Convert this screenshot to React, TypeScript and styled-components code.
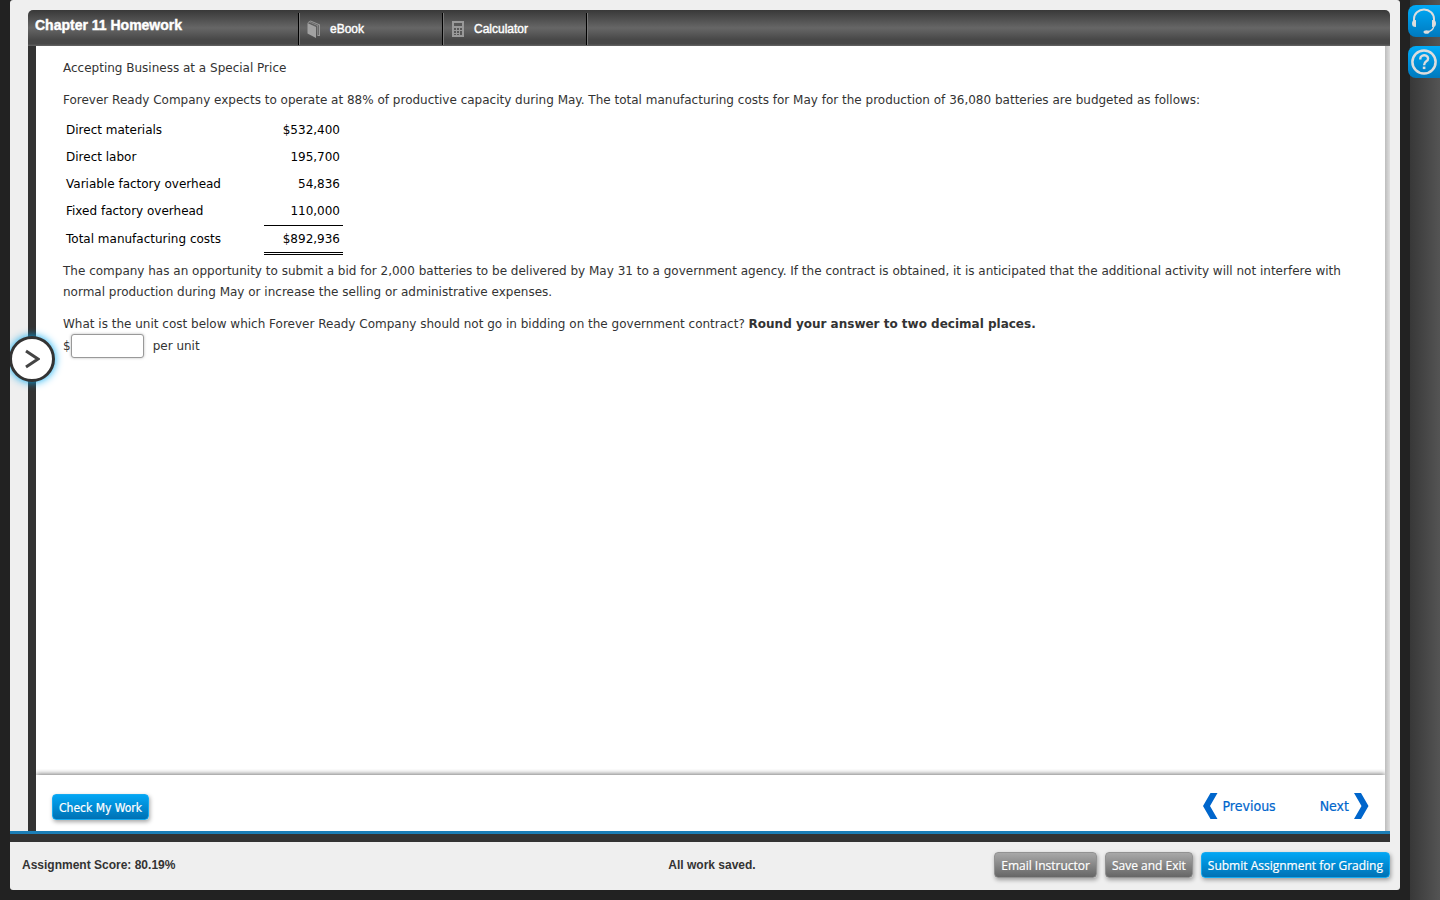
import React from "react";
import styled, { createGlobalStyle, css } from "styled-components";

const GlobalStyle = createGlobalStyle`
  * { box-sizing: border-box; }
  body { margin: 0; background: #222; }
`;

const arial = '"Liberation Sans", Arial, sans-serif';
const verdana = 'Verdana, "DejaVu Sans", sans-serif';
const tahoma = 'Tahoma, "DejaVu Sans Condensed", sans-serif';
const openSans = '"Open Sans", "Noto Sans", sans-serif';

const Page = styled.div`
  display: flex;
  min-height: 100vh;
  padding-left: 10px;
  background: #222;
`;

const Shell = styled.main`
  position: relative;
  flex: 1;
  min-width: 0;
  display: flex;
  flex-direction: column;
  margin-bottom: 10px;
  padding-top: 10px;
  background: #efefef;
  border-radius: 3px;
`;

const Header = styled.header`
  display: flex;
  height: 36px;
  margin: 0 10px 0 18px;
  padding-top: 3px;
  border-radius: 5px 5px 0 0;
  background: linear-gradient(#383838 0%, #666 50%, #484848 82%, #484848 94%, #666 100%);
`;

const Title = styled.h1`
  width: 270px;
  margin: 0;
  padding: 3px 7px 0;
  font: bold 14px/18px ${arial};
  color: #fff;
  -webkit-text-stroke: 0.4px #fff;
`;

const Tools = styled.nav`
  display: flex;
  height: 32px;
  border-right: 1px solid #000;
  box-shadow: 1px 0 #777;
`;

const ToolButton = styled.button`
  display: flex;
  align-items: center;
  gap: 7px;
  width: 144px;
  padding: 0 0 0 8px;
  border: 0;
  border-left: 1px solid #000;
  box-shadow: inset 1px 0 #777;
  background: none;
  color: #fff;
  font: 12px/16px ${arial};
  -webkit-text-stroke: 0.4px #fff;
`;

const Frame = styled.div`
  flex: 1;
  display: flex;
  flex-direction: column;
  margin: 0 10px 0 18px;
  padding-right: 5px;
  border-left: 8px solid #333;
  background: linear-gradient(to left, #dedede 0, #bdbdbd 5px);
`;

const Question = styled.article`
  flex: 1;
  padding: 12px 27px;
  background: #fff;
  color: #333;
  font: 12px/21px ${verdana};
`;

const Paragraph = styled.p`
  margin: 0 0 11px;
`;

const CostTable = styled.table`
  margin: -5px 0 6px;
  border-collapse: collapse;
  color: #000;
  line-height: 21px;
  th {
    width: 201px;
    padding: 3px;
    font-weight: normal;
    text-align: left;
  }
  td {
    width: 79px;
    padding: 3px;
    text-align: right;
  }
`;

const TotalRow = styled.tr`
  td {
    padding: 3px 3px 2px;
    border-top: 1px solid #000;
    border-bottom: 3px double #000;
  }
`;

const AnswerLine = styled.div`
  display: flex;
  align-items: center;
  height: 24px;
  margin-top: -12px;
`;

const AnswerInput = styled.input`
  width: 73px;
  height: 24px;
  margin-right: 9px;
  padding: 0 4px;
  border: 1px solid #999;
  border-radius: 3px;
  box-shadow: 0 0 3px #bbb;
  font: 12px ${verdana};
`;

const ActionBar = styled.div`
  position: relative;
  display: flex;
  align-items: center;
  justify-content: space-between;
  height: 56px;
  padding: 7px 16px 0;
  background: #fff;
  box-shadow: 0 -1px 5px #777;
  clip-path: inset(-6px 0 0 0);
`;

const Pager = styled.div`
  display: flex;
  gap: 44px;
  margin-top: -2px;
`;

const PagerLink = styled.a`
  display: flex;
  align-items: center;
  gap: 5px;
  color: #06c;
  font: 14px/26px ${tahoma};
  -webkit-text-stroke: 0.2px #06c;
  text-decoration: none;
`;

const Button = styled.button<{ $tone: "blue" | "grey"; $face?: string }>`
  height: 26px;
  padding: 2px 6px 0;
  border: 1px solid;
  border-radius: 4px;
  box-shadow: 1px 2px 4px rgba(0, 0, 0, 0.35);
  color: #fff;
  font: 12px/22px ${({ $face }) => $face ?? openSans};
  -webkit-text-stroke: 0.2px #fff;
  white-space: nowrap;
  ${({ $tone }) =>
    $tone === "blue"
      ? css`
          border-color: #16aaf0;
          background: linear-gradient(#02a6f4, #0071b4);
        `
      : css`
          border-color: #929292;
          background: linear-gradient(#a8a8a8, #666);
        `}
`;

const Divider = styled.div`
  height: 11px;
  margin-right: 10px;
  border-top: 3px solid #1c7eb6;
  background: #333;
`;

const Footer = styled.footer`
  display: grid;
  grid-template-columns: 1fr auto 1fr;
  align-items: center;
  height: 48px;
  padding: 0 10px 2px 12px;
  color: #333;
  font: bold 12px/16px ${arial};
`;

const SaveStatus = styled.span`
  padding-left: 12px;
`;

const FooterActions = styled.div`
  display: flex;
  justify-content: flex-end;
  gap: 8px;
`;

const DrawerToggle = styled.button`
  position: absolute;
  left: 0;
  top: 336px;
  display: grid;
  place-items: center;
  width: 46px;
  height: 46px;
  margin-left: -1px;
  padding: 0;
  border: 3px solid #333;
  border-radius: 50%;
  background: #fff;
  box-shadow: 0 0 9px #00a8f0;
  clip-path: inset(-12px -12px -12px 1px);
`;

const Rail = styled.aside`
  display: flex;
  flex-direction: column;
  gap: 9px;
  width: 30px;
  margin-left: 10px;
  padding-top: 5px;
  background: linear-gradient(to right, #383838, #545454);
`;

const RailButton = styled.button`
  display: grid;
  place-items: center;
  width: 32px;
  height: 32px;
  margin-left: -2px;
  padding: 0;
  border: 0;
  border-radius: 8px 0 0 8px;
  background: linear-gradient(#00abf8, #0079be);
`;

const BookIcon = () => (
  <svg width="16" height="18" viewBox="0 0 16 18" aria-hidden="true">
    <path d="M.5 3 9 7V18L.5 13.500Z" fill="#a2a2a2" />
    <path d="M.5 2.500 3.500.5 13 4.500V16H10V6.200L3 3Z" fill="#999" />
    <path d="M2 2.600 10 6.200V16.500M3 1.700 11.500 5.300V15" fill="none" stroke="#555" strokeWidth=".7" />
  </svg>
);

const CalculatorIcon = () => (
  <svg width="16" height="16" viewBox="0 0 16 16" aria-hidden="true">
    <path d="M1 0H13V16H1Z" fill="#999" />
    <path
      d="M3 2H11V5H3ZM3 7H5V9H3ZM6 7H8V9H6ZM9 7H11V9H9ZM3 10H5V12H3ZM6 10H8V12H6ZM9 10H11V14H9ZM3 13H5V14H3ZM6 13H8V14H6Z"
      fill="#575757"
    />
  </svg>
);

const HeadsetIcon = () => (
  <svg width="26" height="26" viewBox="0 0 26 26" fill="none" aria-hidden="true">
    <path d="M3 14V11a10 9.5 0 0 1 20 0v3" stroke="#ddd" strokeWidth="2" />
    <path d="M5 12v7C2 19 1 18 1 15.5S2 12 5 12ZM21 12v7c3 0 4-1 4-3.500S24 12 21 12Z" fill="#ddd" />
    <path d="M23 18c-1 4-3 5-7 6" stroke="#ddd" strokeWidth="1.300" />
    <ellipse cx="15.500" cy="24" rx="3" ry="1.800" fill="#ddd" />
  </svg>
);

const HelpIcon = () => (
  <svg width="26" height="26" viewBox="0 0 26 26" fill="none" aria-hidden="true">
    <circle cx="13" cy="13" r="11.600" stroke="#ddd" strokeWidth="2.500" />
    <path d="M9.300 10.500V9.500a3.900 3.200 0 1 1 6 2.700c-1.500 1-2.200 1.800-2.200 4" stroke="#ddd" strokeWidth="2.400" />
    <path d="M11.800 17.600h2.600v2.500h-2.600Z" fill="#ddd" />
  </svg>
);

const PreviousIcon = () => (
  <svg width="15" height="26" viewBox="0 0 15 26" aria-hidden="true">
    <path d="M7.500 0h7L7 13l7.500 13h-7L0 13Z" fill="#06c" />
  </svg>
);

const NextIcon = () => (
  <svg width="15" height="26" viewBox="0 0 15 26" aria-hidden="true">
    <path d="M7 0H0l7.500 13L0 26h7l7.500-13Z" fill="#06c" />
  </svg>
);

const costs = [
  ["Direct materials", "$532,400"],
  ["Direct labor", "195,700"],
  ["Variable factory overhead", "54,836"],
  ["Fixed factory overhead", "110,000"],
];

export default function App() {
  return (
    <Page>
      <GlobalStyle />
      <Shell>
        <Header>
          <Title>Chapter 11 Homework</Title>
          <Tools>
            <ToolButton><BookIcon />eBook</ToolButton>
            <ToolButton><CalculatorIcon />Calculator</ToolButton>
          </Tools>
        </Header>
        <Frame>
          <Question>
            <Paragraph>Accepting Business at a Special Price</Paragraph>
            <Paragraph>
              Forever Ready Company expects to operate at 88% of productive capacity during May. The total
              manufacturing costs for May for the production of 36,080 batteries are budgeted as follows:
            </Paragraph>
            <CostTable>
              <tbody>
                {costs.map(([label, amount]) => (
                  <tr key={label}>
                    <th scope="row">{label}</th>
                    <td>{amount}</td>
                  </tr>
                ))}
                <TotalRow>
                  <th scope="row">Total manufacturing costs</th>
                  <td>$892,936</td>
                </TotalRow>
              </tbody>
            </CostTable>
            <Paragraph>
              The company has an opportunity to submit a bid for 2,000 batteries to be delivered by May 31 to a
              government agency. If the contract is obtained, it is anticipated that the additional activity will
              not interfere with normal production during May or increase the selling or administrative expenses.
            </Paragraph>
            <Paragraph>
              What is the unit cost below which Forever Ready Company should not go in bidding on the government
              contract? <b>Round your answer to two decimal places.</b>
            </Paragraph>
            <AnswerLine>
              <label htmlFor="unit-cost">$</label>
              <AnswerInput id="unit-cost" type="text" />
              <span>per unit</span>
            </AnswerLine>
          </Question>
          <ActionBar>
            <Button $tone="blue" $face={tahoma}>Check My Work</Button>
            <Pager>
              <PagerLink href="#previous"><PreviousIcon />Previous</PagerLink>
              <PagerLink href="#next">Next<NextIcon /></PagerLink>
            </Pager>
          </ActionBar>
        </Frame>
        <Divider />
        <Footer>
          <span>Assignment Score: 80.19%</span>
          <SaveStatus>All work saved.</SaveStatus>
          <FooterActions>
            <Button $tone="grey">Email Instructor</Button>
            <Button $tone="grey">Save and Exit</Button>
            <Button $tone="blue">Submit Assignment for Grading</Button>
          </FooterActions>
        </Footer>
        <DrawerToggle aria-label="Open assignment list">
          <svg width="16" height="20" viewBox="0 0 16 20" fill="none" aria-hidden="true">
            <path d="M2 2 14 10 2 18" stroke="#444" strokeWidth="3" />
          </svg>
        </DrawerToggle>
      </Shell>
      <Rail>
        <RailButton aria-label="Support"><HeadsetIcon /></RailButton>
        <RailButton aria-label="Help"><HelpIcon /></RailButton>
      </Rail>
    </Page>
  );
}
